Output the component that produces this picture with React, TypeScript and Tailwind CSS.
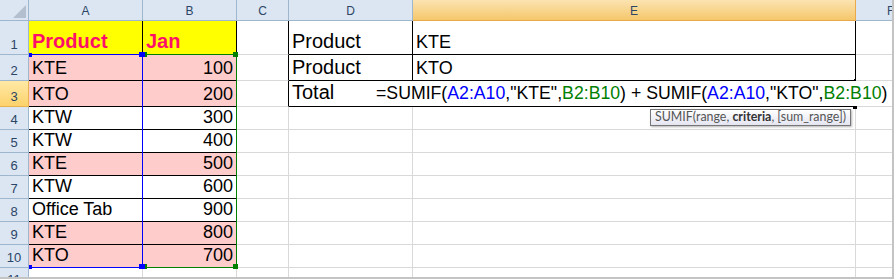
import React from "react";

type Row = {
  n: number;
  a?: string;
  b?: string;
  pink?: boolean;
};

const rows: Row[] = [
  { n: 1, a: "Product", b: "Jan" },
  { n: 2, a: "KTE", b: "100", pink: true },
  { n: 3, a: "KTO", b: "200", pink: true },
  { n: 4, a: "KTW", b: "300" },
  { n: 5, a: "KTW", b: "400" },
  { n: 6, a: "KTE", b: "500", pink: true },
  { n: 7, a: "KTW", b: "600" },
  { n: 8, a: "Office Tab", b: "900" },
  { n: 9, a: "KTE", b: "800", pink: true },
  { n: 10, a: "KTO", b: "700", pink: true },
  { n: 11 },
];

const hdr =
  "bg-[#dce6f2] border-r border-b border-[#9eb6ce] flex items-end justify-center pb-[3px] text-[12px] leading-none text-[#2b4566]";
const grid = "border-r border-b border-[#d9d9d9]";

function RowHeader({ n }: { n: number }) {
  if (n === 11) {
    return (
      <div className="bg-[#dce6f2] border-r border-[#9eb6ce] overflow-hidden flex justify-center">
        <span className="mt-[5px] text-[13px] leading-none text-[#2b4566]">11</span>
      </div>
    );
  }
  const cls =
    n === 3
      ? "bg-gradient-to-b from-[#ffe9a6] to-[#fcd26a] border-r border-b border-[#e9b34f] flex items-end justify-center pb-[3px] text-[13px] leading-none text-[#2b4566]"
      : "bg-[#dce6f2] border-r border-b border-[#9eb6ce] flex items-end justify-center pb-[3px] text-[13px] leading-none text-[#2b4566]";
  return <div className={cls}>{n}</div>;
}

function CellA({ r }: { r: Row }) {
  if (r.n === 1)
    return (
      <div className="bg-[#ffff00] border-r border-b border-black flex items-end pl-[3px] pb-[3px] text-[20px] leading-none font-bold text-[#ff0f6a]">
        {r.a}
      </div>
    );
  if (r.n === 11) return <div className="border-r border-[#d9d9d9]" />;
  return (
    <div
      className={
        r.pink
          ? "bg-[#ffcccc] border-r border-b border-black flex items-end pl-[3px] pb-[3px] text-[18px] leading-none text-black"
          : "bg-white border-r border-b border-black flex items-end pl-[3px] pb-[3px] text-[18px] leading-none text-black"
      }
    >
      {r.a}
    </div>
  );
}

function CellB({ r }: { r: Row }) {
  if (r.n === 1)
    return (
      <div className="bg-[#ffff00] border-r border-b border-black flex items-end pl-[3px] pb-[3px] text-[20px] leading-none font-bold text-[#ff0f6a]">
        {r.b}
      </div>
    );
  if (r.n === 11) return <div className="border-r border-[#d9d9d9]" />;
  return (
    <div
      className={
        r.pink
          ? "bg-[#ffcccc] border-r border-b border-black flex items-end justify-end pr-[3px] pb-[3px] text-[18px] leading-none text-black"
          : "bg-white border-r border-b border-black flex items-end justify-end pr-[3px] pb-[3px] text-[18px] leading-none text-black"
      }
    >
      {r.b}
    </div>
  );
}

function RestCells({ r }: { r: Row }) {
  const n = r.n;
  if (n === 1 || n === 2) {
    return (
      <>
        <div className="border-r border-b border-r-black border-b-[#d9d9d9]" />
        <div className="border-r border-b border-black flex items-end pl-[3px] pb-[3px] text-[20px] leading-none text-black">
          Product
        </div>
        <div className="border-r border-b border-black flex items-end pl-[3px] pb-[3px] text-[18px] leading-none text-black">
          {n === 1 ? "KTE" : "KTO"}
        </div>
        <div className="border-b border-[#d9d9d9]" />
      </>
    );
  }
  if (n === 3) {
    return (
      <>
        <div className="border-r border-b border-r-black border-b-[#d9d9d9]" />
        <div className="col-span-2 border-b border-black flex items-end pl-[3px] pb-[3px] overflow-visible">
          <div className="flex items-baseline leading-none text-black whitespace-nowrap">
            <span className="w-[84px] shrink-0 text-[20px]">Total</span>
            <span className="shrink-0 text-[17.7px]">
              =SUMIF(<span className="text-[#0000ff]">A2:A10</span>,"KTE",
              <span className="text-[#008000]">B2:B10</span>) + SUMIF(
              <span className="text-[#0000ff]">A2:A10</span>,"KTO",
              <span className="text-[#008000]">B2:B10</span>)
            </span>
          </div>
        </div>
        <div className="border-b border-[#d9d9d9]" />
      </>
    );
  }
  if (n === 11) {
    return (
      <>
        <div className="border-r border-[#d9d9d9]" />
        <div className="border-r border-[#d9d9d9]" />
        <div className="border-r border-[#d9d9d9]" />
        <div />
      </>
    );
  }
  return (
    <>
      <div className={grid} />
      <div className={grid} />
      <div className={grid} />
      <div className="border-b border-[#d9d9d9]" />
    </>
  );
}

export default function App() {
  return (
    <div className="relative w-[894px] h-[279px] overflow-hidden bg-white border-r-2 border-b-2 border-[#c4c4c4] font-['Liberation_Sans',Arial,sans-serif]">
      <div className="grid grid-cols-[29px_114px_94px_52px_124px_443px_36px] grid-rows-[21px_34px_26px_26px_23px_23px_23px_23px_23px_23px_23px_9px]">
        {/* header row */}
        <div className="bg-[#dce6f2] border-r border-b border-[#9eb6ce] flex items-end justify-end pr-[2px] pb-[2px]">
          <svg width="13" height="13" viewBox="0 0 13 13">
            <polygon points="13,0 13,13 0,13" fill="#b3bfce" />
          </svg>
        </div>
        <div className={hdr}>A</div>
        <div className={hdr}>B</div>
        <div className={hdr}>C</div>
        <div className={hdr}>D</div>
        <div className="bg-gradient-to-b from-[#fbe3b0] to-[#f5c76a] border-r border-b border-[#e9a94a] flex items-end justify-center pb-[3px] text-[12px] leading-none text-[#2b4566]">
          E
        </div>
        <div className="bg-[#dce6f2] border-b border-[#9eb6ce] flex items-end pl-[31px] pb-[3px] text-[12px] leading-none text-[#2b4566] overflow-hidden">
          F
        </div>

        {rows.map((r) => (
          <React.Fragment key={r.n}>
            <RowHeader n={r.n} />
            <CellA r={r} />
            <CellB r={r} />
            <RestCells r={r} />
          </React.Fragment>
        ))}
      </div>

      {/* range finder: A2:A10 blue */}
      <div className="absolute left-[29px] top-[54px] w-[114px] h-[214px] border-t border-r border-b border-[#0000ff]" />
      {/* range finder: B2:B10 green */}
      <div className="absolute left-[143px] top-[54px] w-[94px] h-[214px] border-t border-r border-b border-[#008000]" />
      {/* handles */}
      <div className="absolute left-[141px] top-[52px] w-[6px] h-[5px] bg-[#008000]" />
      <div className="absolute left-[139px] top-[52px] w-[6px] h-[5px] bg-[#0000ff]" />
      <div className="absolute left-[29px] top-[53px] w-[3px] h-[4px] bg-[#0000ff]" />
      <div className="absolute left-[233px] top-[52px] w-[5px] h-[5px] bg-[#008000]" />
      <div className="absolute left-[141px] top-[264px] w-[6px] h-[5px] bg-[#008000]" />
      <div className="absolute left-[139px] top-[264px] w-[6px] h-[5px] bg-[#0000ff]" />
      <div className="absolute left-[29px] top-[265px] w-[3px] h-[4px] bg-[#0000ff]" />
      <div className="absolute left-[233px] top-[264px] w-[5px] h-[5px] bg-[#008000]" />
      <div className="absolute left-[854px] top-[79px] w-[2px] h-[2px] bg-black" />
      <div className="absolute left-[853px] top-[106px] w-[4px] h-[3px] bg-black" />

      {/* tooltip */}
      <div className="absolute left-[650px] top-[109px] w-[201px] h-[17px] border border-[#767676] bg-gradient-to-b from-white to-[#e4e5f0] shadow-[1px_1px_2px_rgba(0,0,0,0.3)] flex items-center pl-[4px] text-[12.4px] leading-none text-[#555555] font-['Lato',sans-serif]">
        <span className="whitespace-pre">
          SUMIF(range, <span className="font-bold text-[#333333]">criteria</span>, [sum_range])
        </span>
      </div>
    </div>
  );
}
